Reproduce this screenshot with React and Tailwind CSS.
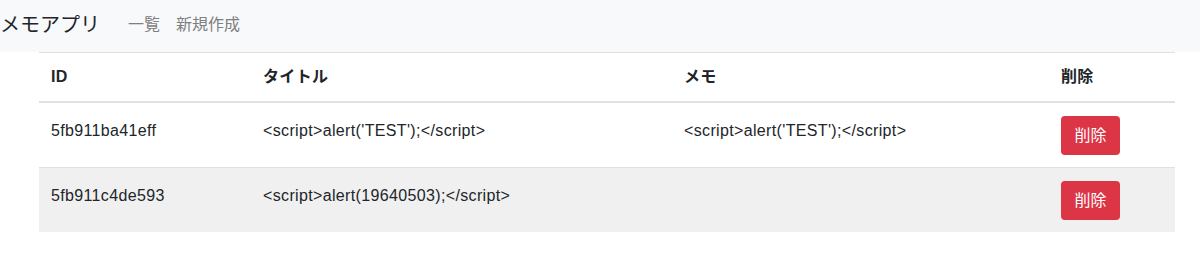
const memos = [
  { id: '5fb911ba41eff', title: "<script>alert('TEST');</script>", memo: "<script>alert('TEST');</script>" },
  { id: '5fb911c4de593', title: '<script>alert(19640503);</script>', memo: '' },
];

export default function App() {
  return (
    <div className="min-h-[262px] bg-white text-[#212529]" style={{ fontFamily: '"Liberation Sans", "Noto Sans CJK JP", sans-serif' }}>
      <nav className="flex h-[52px] items-center bg-[#f8f9fa]">
        <span className="text-[20px] leading-[30px] text-[#212529] pb-[2px]">メモアプリ</span>
        <div className="ml-[20px] flex text-[16px] text-[#7f7f7f] pb-[2px]">
          <a className="px-2">一覧</a>
          <a className="px-2">新規作成</a>
        </div>
      </nav>
      <div className="pl-[39px] pr-[25px]">
        <table className="w-full border-collapse text-[16px] leading-6 tracking-[0.35px]">
          <thead>
            <tr className="border-t border-[#dee2e6]">
              <th className="w-[212px] border-b-2 border-[#dee2e6] px-3 py-3 text-left font-bold">ID</th>
              <th className="w-[421px] border-b-2 border-[#dee2e6] px-3 py-3 text-left font-bold">タイトル</th>
              <th className="w-[377px] border-b-2 border-[#dee2e6] px-3 py-3 text-left font-bold">メモ</th>
              <th className="border-b-2 border-[#dee2e6] px-3 py-3 text-left font-bold">削除</th>
            </tr>
          </thead>
          <tbody>
            {memos.map((m, i) => (
              <tr key={m.id} className={`border-t border-[#dee2e6] ${i % 2 === 1 ? 'bg-[#f0f0f0]' : ''}`}>
                <td className="px-3 pt-[16px] pb-3 align-top">{m.id}</td>
                <td className="px-3 pt-[16px] pb-3 align-top">{m.title}</td>
                <td className="px-3 pt-[16px] pb-3 align-top">{m.memo}</td>
                <td className="px-3 pt-[13px] pb-[12px] align-top">
                  <button className="h-[39px] w-[59px] rounded-[4px] bg-[#dc3545] text-[16px] tracking-normal text-white">削除</button>
                </td>
              </tr>
            ))}
          </tbody>
        </table>
      </div>
    </div>
  );
}
